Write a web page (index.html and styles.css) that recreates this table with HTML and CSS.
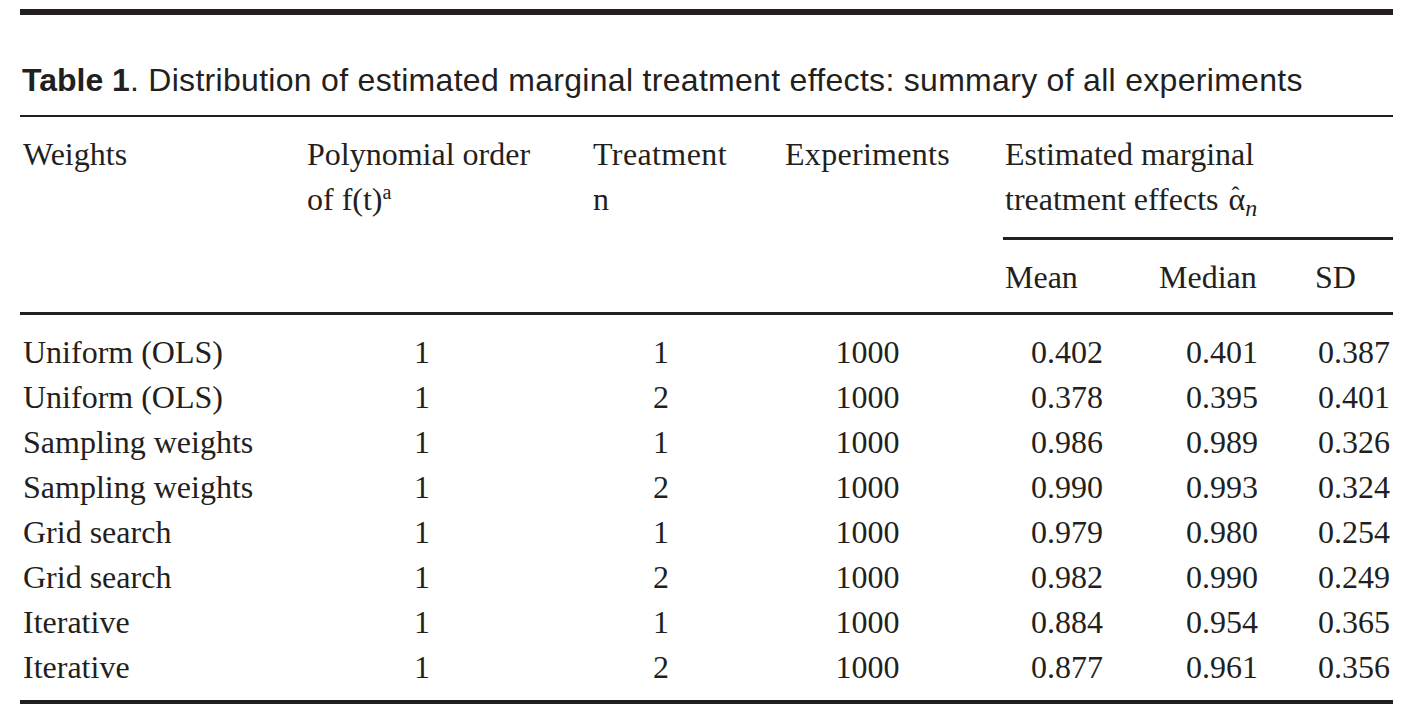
FILE: index.html
```html
<!DOCTYPE html>
<html lang="en">
<head>
<meta charset="utf-8">
<title>Table 1</title>
<link rel="stylesheet" href="styles.css">
</head>
<body>
<div class="page">
  <div class="sheet">
    <h1 class="caption"><b>Table 1</b>. Distribution of estimated marginal treatment effects: summary of all experiments</h1>
    <div class="head">
      <div class="hc c1 span2">Weights</div>
      <div class="hc c2 span2">Polynomial order<br>of f(t)<sup>a</sup></div>
      <div class="hc c3 span2">Treatment<br>n</div>
      <div class="hc c4 span2">Experiments</div>
      <div class="hc group">Estimated marginal<br>treatment effects <span class="hat">α</span><sub><i>n</i></sub></div>
      <div class="hc sub c5">Mean</div>
      <div class="hc sub c6">Median</div>
      <div class="hc sub c7">SD</div>
    </div>
    <div class="body">
      <div class="row"><div class="w">Uniform (OLS)</div><div class="p">1</div><div class="t">1</div><div class="e">1000</div><div class="mn">0.402</div><div class="md">0.401</div><div class="sd">0.387</div></div>
      <div class="row"><div class="w">Uniform (OLS)</div><div class="p">1</div><div class="t">2</div><div class="e">1000</div><div class="mn">0.378</div><div class="md">0.395</div><div class="sd">0.401</div></div>
      <div class="row"><div class="w">Sampling weights</div><div class="p">1</div><div class="t">1</div><div class="e">1000</div><div class="mn">0.986</div><div class="md">0.989</div><div class="sd">0.326</div></div>
      <div class="row"><div class="w">Sampling weights</div><div class="p">1</div><div class="t">2</div><div class="e">1000</div><div class="mn">0.990</div><div class="md">0.993</div><div class="sd">0.324</div></div>
      <div class="row"><div class="w">Grid search</div><div class="p">1</div><div class="t">1</div><div class="e">1000</div><div class="mn">0.979</div><div class="md">0.980</div><div class="sd">0.254</div></div>
      <div class="row"><div class="w">Grid search</div><div class="p">1</div><div class="t">2</div><div class="e">1000</div><div class="mn">0.982</div><div class="md">0.990</div><div class="sd">0.249</div></div>
      <div class="row"><div class="w">Iterative</div><div class="p">1</div><div class="t">1</div><div class="e">1000</div><div class="mn">0.884</div><div class="md">0.954</div><div class="sd">0.365</div></div>
      <div class="row"><div class="w">Iterative</div><div class="p">1</div><div class="t">2</div><div class="e">1000</div><div class="mn">0.877</div><div class="md">0.961</div><div class="sd">0.356</div></div>
    </div>
  </div>
</div>
</body>
</html>
```

FILE: styles.css
```css
html, body {
  margin: 0;
  padding: 0;
  background: #ffffff;
}

.page {
  padding: 9px 13px 0 20px;
}

.sheet {
  width: 1373px;
  border-top: 6px solid #231f20;
  color: #231f20;
}

.caption {
  margin: 47px 0 0 0;
  padding: 0 0 0 2px;
  font-family: "Liberation Sans", Arial, sans-serif;
  font-size: 32px;
  font-weight: normal;
  letter-spacing: 0.3px;
  line-height: 36px;
  height: 53px;
  white-space: nowrap;
  color: #231f20;
}

.caption b {
  font-weight: bold;
  letter-spacing: 0;
}

.head,
.row {
  display: grid;
  grid-template-columns: 287px 286px 192px 218px 156px 156px 78px;
  font-family: "Liberation Serif", "Times New Roman", serif;
  font-size: 32px;
  line-height: 45px;
}

.head {
  grid-template-rows: auto auto;
  border-top: 2px solid #231f20;
  border-bottom: 3px solid #231f20;
}

.hc {
  padding-top: 15px;
  white-space: nowrap;
}

.span2 {
  grid-row: 1 / 3;
}

.c1 { grid-column: 1; padding-left: 3px; }
.c2 { grid-column: 2; }
.c3 { grid-column: 3; letter-spacing: 0.4px; }
.c4 { grid-column: 4; letter-spacing: 0.3px; }

.group {
  grid-column: 5 / 8;
  grid-row: 1;
  padding-left: 2px;
  padding-bottom: 15px;
  border-bottom: 3px solid #231f20;
}

.sub {
  grid-row: 2;
  padding-bottom: 12px;
}

.c5 { grid-column: 5; padding-left: 2px; }
.c6 { grid-column: 6; }
.c7 { grid-column: 7; }

sup {
  font-size: 20px;
  line-height: 0;
  vertical-align: 11px;
}

sub {
  font-size: 24px;
  line-height: 0;
  vertical-align: -6px;
}

.hat {
  position: relative;
  display: inline-block;
  margin-left: 2px;
}

.hat::after {
  content: "\02C6";
  position: absolute;
  left: 3px;
  top: -4px;
  font-size: 24px;
}

.body {
  padding: 15px 0 10px 0;
  border-bottom: 4px solid #231f20;
}

.row {
  white-space: nowrap;
}

.w { padding-left: 3px; }
.p { text-align: center; padding-right: 56px; }
.t { text-align: center; padding-right: 56px; }
.e { text-align: center; padding-right: 53px; }
.mn { text-align: right; padding-right: 56px; }
.md { text-align: right; padding-right: 57px; }
.sd { text-align: right; padding-right: 3px; }
```
